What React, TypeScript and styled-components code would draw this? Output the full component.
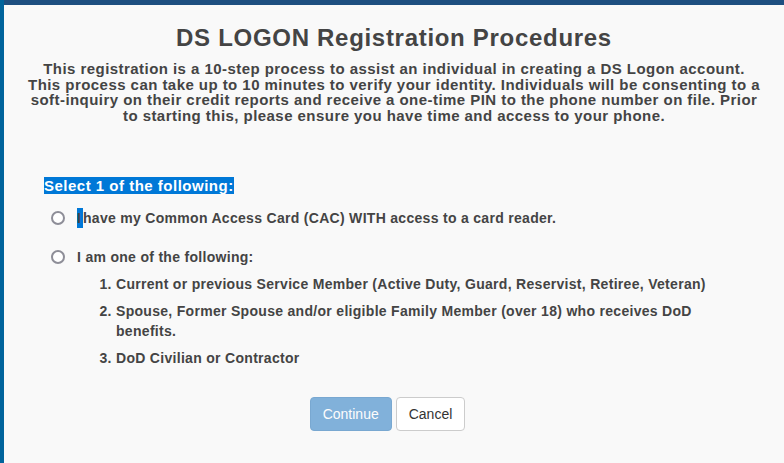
import React from "react";
import styled, { createGlobalStyle } from "styled-components";

const GlobalStyle = createGlobalStyle`
  html, body {
    margin: 0;
    padding: 0;
    background: #f9f9f9;
  }
  body {
    font-family: "Liberation Sans", Arial, Helvetica, sans-serif;
    color: #444;
  }
  * { box-sizing: border-box; }
`;

const Frame = styled.div`
  min-height: 463px;
  border-left: 4px solid #00649c;
  background: #f9f9f9;
`;

const TopBar = styled.div`
  height: 5px;
  background: #1e4f80;
`;

const Content = styled.main`
  padding: 0 15px;
`;

const Title = styled.h1`
  margin: 21px 0 0;
  font-size: 24px;
  line-height: 24px;
  letter-spacing: 0.7px;
  font-weight: bold;
  text-align: center;
  color: #444;
`;

const Intro = styled.p`
  margin: 11px 0 0;
  padding: 0 3px;
  font-size: 15px;
  line-height: 15.6px;
  letter-spacing: 0.45px;
  font-weight: bold;
  text-align: center;
  color: #444;
`;

const Section = styled.section`
  margin-top: 53px;
  padding: 0 40px 0 25px;
`;

const Heading = styled.div`
  height: 19px;
  font-size: 15px;
  line-height: 19px;
  letter-spacing: 0.5px;
  font-weight: bold;
`;

const Selected = styled.span`
  background: #0078d7;
  color: #fff;
`;

const Option = styled.label<{ $gap: number }>`
  display: flex;
  align-items: center;
  gap: 12px;
  margin-top: ${(p) => p.$gap}px;
  font-size: 14px;
  line-height: 20px;
  letter-spacing: 0.3px;
  font-weight: bold;
  color: #444;
`;

const Radio = styled.input.attrs({ type: "radio", name: "who" })`
  appearance: none;
  margin: 0 0 0 7px;
  width: 14px;
  height: 14px;
  border: 2px solid #8e8e98;
  border-radius: 50%;
  background: #fff;
  flex: none;
`;

const CaretSel = styled.span`
  display: inline-block;
  width: 6px;
  background: #0078d7;
  color: #444;
`;

const List = styled.ol`
  margin: 7px 0 0;
  padding: 0 0 0 72px;
  font-size: 14px;
  line-height: 20px;
  letter-spacing: 0.3px;
  font-weight: bold;
  color: #444;
`;

const Item = styled.li`
  margin-bottom: 7px;
  &:last-child { margin-bottom: 0; }
`;

const ButtonRow = styled.div`
  display: flex;
  justify-content: center;
  gap: 4px;
  margin-top: 29px;
  padding-left: 2px;
`;

const Button = styled.button<{ $primary?: boolean }>`
  font-family: "Liberation Sans", Arial, sans-serif;
  font-size: 14px;
  line-height: 20px;
  padding: 6px 12px;
  border-radius: 4px;
  border: 1px solid ${(p) => (p.$primary ? "#357ebd" : "#ccc")};
  background: ${(p) => (p.$primary ? "#428bca" : "#fff")};
  color: ${(p) => (p.$primary ? "#fff" : "#333")};
  opacity: ${(p) => (p.$primary ? 0.65 : 1)};
  cursor: pointer;
`;

export default function App() {
  return (
    <>
      <GlobalStyle />
      <Frame>
        <TopBar />
        <Content>
          <Title>DS LOGON Registration Procedures</Title>
          <Intro>
            This registration is a 10-step process to assist an individual in creating a DS Logon account.
            <br />
            This process can take up to 10 minutes to verify your identity. Individuals will be consenting to a
            soft-inquiry on their credit reports and receive a one-time PIN to the phone number on file. Prior to
            starting this, please ensure you have time and access to your phone.
          </Intro>
          <Section>
            <Heading>
              <Selected>Select 1 of the following:</Selected>
            </Heading>
            <Option $gap={13}>
              <Radio />
              <span>
                <CaretSel>I</CaretSel>have my Common Access Card (CAC) WITH access to a card reader.
              </span>
            </Option>
            <Option $gap={19}>
              <Radio />
              <span>I am one of the following:</span>
            </Option>
            <List>
              <Item>Current or previous Service Member (Active Duty, Guard, Reservist, Retiree, Veteran)</Item>
              <Item>Spouse, Former Spouse and/or eligible Family Member (over 18) who receives DoD benefits.</Item>
              <Item>DoD Civilian or Contractor</Item>
            </List>
            <ButtonRow>
              <Button $primary disabled>
                Continue
              </Button>
              <Button>Cancel</Button>
            </ButtonRow>
          </Section>
        </Content>
      </Frame>
    </>
  );
}
